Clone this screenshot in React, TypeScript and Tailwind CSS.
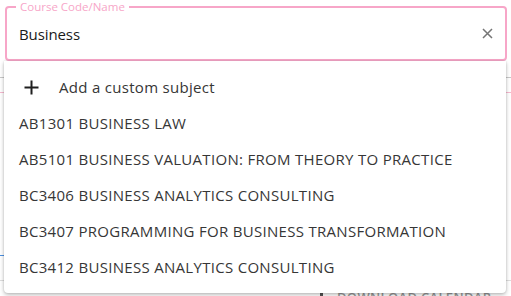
import React from "react";

const items = [
  "AB1301 BUSINESS LAW",
  "AB5101 BUSINESS VALUATION: FROM THEORY TO PRACTICE",
  "BC3406 BUSINESS ANALYTICS CONSULTING",
  "BC3407 PROGRAMMING FOR BUSINESS TRANSFORMATION",
  "BC3412 BUSINESS ANALYTICS CONSULTING",
];

export default function App() {
  return (
    <div
      className="relative w-[511px] h-[296px] overflow-hidden bg-white"
      style={{ fontFamily: '"Open Sans", "Noto Sans", sans-serif' }}
    >
      {/* background page lines */}
      <div className="flex flex-col">
        <div className="h-[78px] border-b border-[#c8c8c8]" />
        <div className="h-[15px] border-b border-[#f6b8cf]" />
        <div className="h-[163px] border-b border-[#4a90e2] w-[12px]" />
        <div className="h-[25px] border-b border-[#dddddd]" />
        <div className="flex items-center gap-[14px] pl-[320px] pt-[7px] text-[13px] font-semibold text-[#9a9a9a] tracking-wide">
          <span className="w-[3px] h-[12px] bg-[#555]" />
          <span>DOWNLOAD CALENDAR</span>
        </div>
      </div>

      {/* input */}
      <div className="absolute left-[5px] top-[6px] w-[502px] h-[55px] rounded-[4px] border-2 border-[#f7a6c8] bg-white flex items-center pl-[12px] pr-[12px]">
        <span className="absolute left-[9px] top-[-8px] bg-white px-[4px] text-[11.5px] leading-[14px] text-[#f7a6c8]">
          Course Code/Name
        </span>
        <span className="flex-1 text-[15px] tracking-[-0.1px] text-[#1a1a1a] pt-[1px]">Business</span>
        <svg width="11" height="11" viewBox="0 0 11 11">
          <path d="M1 1 L10 10 M10 1 L1 10" stroke="#757575" strokeWidth="1.5" />
        </svg>
      </div>

      {/* dropdown */}
      <div className="absolute left-[4px] top-[61px] w-[502px] h-[232px] bg-white rounded-b-[4px] shadow-[0_2px_4px_rgba(0,0,0,0.25),0_0_2px_rgba(0,0,0,0.15)] flex flex-col pt-[8px] text-[15px] tracking-[0.3px] text-[#363636]">
        <div className="h-[36px] flex items-center pl-[20px]">
          <svg width="15" height="15" viewBox="0 0 15 15">
            <path d="M7.5 0.5 V14.5 M0.5 7.5 H14.5" stroke="#1f1f1f" strokeWidth="2" />
          </svg>
          <span className="ml-[20px]">Add a custom subject</span>
        </div>
        {items.map((t) => (
          <div key={t} className="h-[36px] flex items-center pl-[15px]">
            {t}
          </div>
        ))}
      </div>
    </div>
  );
}
